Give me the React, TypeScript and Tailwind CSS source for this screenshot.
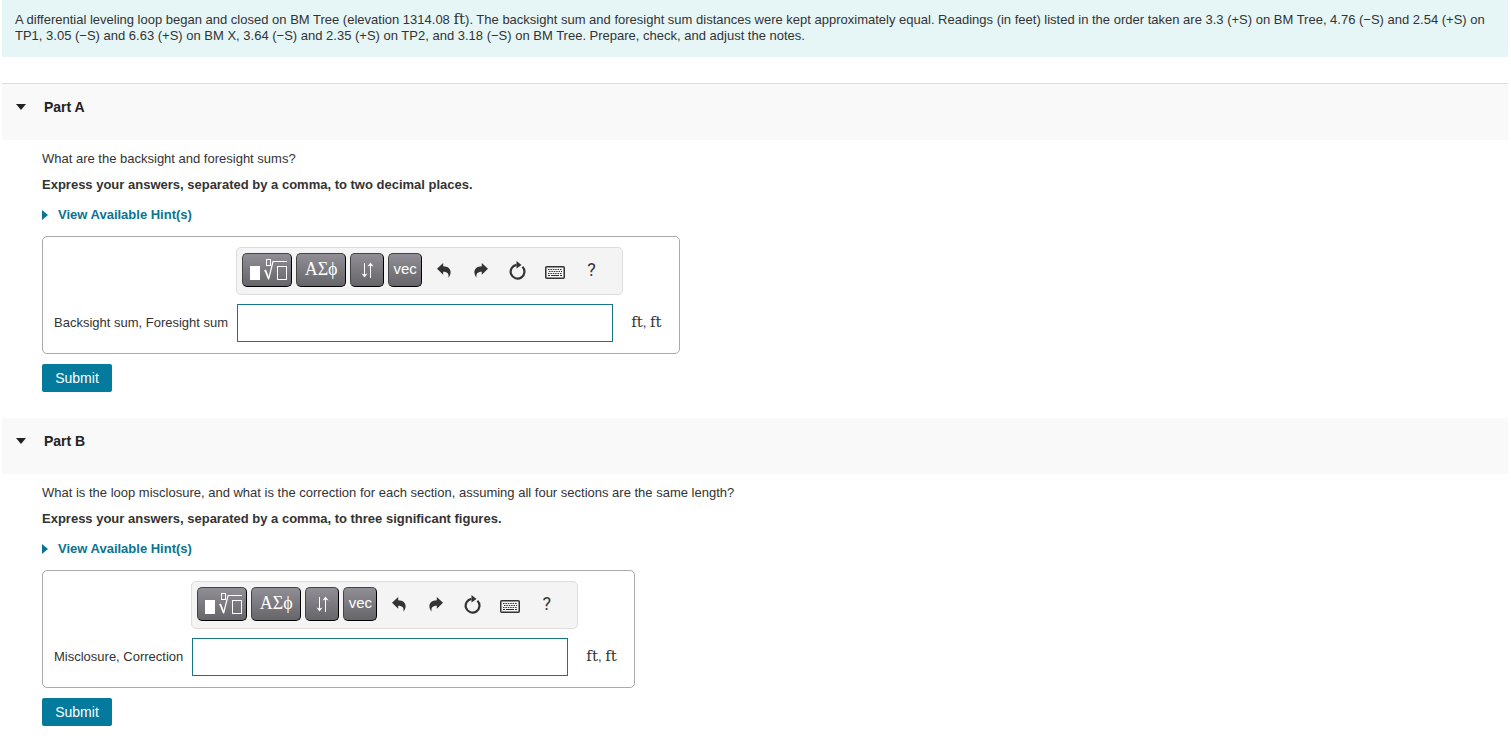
import React, { useId, useState } from "react";

interface PartProps {
  title: string;
  question: string;
  instruction: string;
  label: string;
  first?: boolean;
}

const Unit = ({ children }: { children: React.ReactNode }) => (
  <span className="font-['DejaVu_Serif',serif] text-[15px] leading-none">{children}</span>
);

const TemplatesIcon = () => (
  <svg width="40" height="24" viewBox="0 0 40 24" fill="none" stroke="white" aria-hidden="true">
    <rect x="3" y="8" width="10" height="14" fill="white" stroke="none" />
    <rect x="19.5" y="1.5" width="4" height="6" strokeWidth="1" />
    <path d="M17 13l2-1" strokeWidth="1" />
    <path d="M18.500 12.500l3 8" strokeWidth="1.800" />
    <path d="M21.500 21.500L26 3.500H40" strokeWidth="1.200" />
    <rect x="30.5" y="8.5" width="9" height="13" strokeWidth="1" />
  </svg>
);

const ArrowsIcon = () => (
  <svg width="14" height="18" viewBox="0 0 14 18" fill="none" stroke="white" aria-hidden="true">
    <path d="M4.500 2v13M10.500 17V4" strokeWidth="1" />
    <path d="M1.500 12.500l3 1 3-1-3 4zM7.500 5.500l3-1 3 1-3-4z" fill="white" stroke="none" />
  </svg>
);

const UndoIcon = () => (
  <svg width="14" height="15" viewBox="0 0 14 15" fill="#333333" aria-hidden="true">
    <path d="M6.200 0v3.200c4.800.1 7.600 2.600 7.400 6.400-.1 2-.9 3.600-2.200 5.100.7-3.700-.6-6-5.200-6v3.100L0 5.800z" />
  </svg>
);

const RedoIcon = () => (
  <svg width="14" height="15" viewBox="0 0 14 15" fill="#333333" aria-hidden="true">
    <path d="M7.800 0v3.200C3 3.300.2 5.800.4 9.600c.1 2 .9 3.600 2.200 5.100-.7-3.700.6-6 5.200-6v3.100L14 5.800z" />
  </svg>
);

const ResetIcon = () => (
  <svg width="18" height="19" viewBox="0 0 18 19" aria-hidden="true">
    <path d="M13.400 5.800a6.900 6.900 0 1 1-5.900-1.900" fill="none" stroke="#333333" strokeWidth="2.200" />
    <path d="M7.500 0l5 4-5 3.500z" fill="#333333" />
  </svg>
);

const KeyboardIcon = () => (
  <svg width="20" height="13" viewBox="0 0 20 13" fill="none" stroke="#333333" aria-hidden="true">
    <rect x="0.750" y="0.750" width="18.500" height="11.500" rx="1" strokeWidth="1.500" />
    <path d="M3 3.500h14M4 5.500h13M3 7.500h14" strokeWidth="1" strokeDasharray="1.500 0.900" />
    <path d="M3 9.500h2M6 9.500h8M15 9.500h2" strokeWidth="1.200" />
  </svg>
);

const paletteButton =
  "flex h-[34px] items-center justify-center rounded-[5px] border border-t-[#444444] border-r-black border-b-black border-l-[#444444] bg-linear-to-b from-[#918f96] to-[#666569] text-white";
const iconButton = "flex h-[34px] w-[33px] items-center justify-center text-[#333333]";

const Toolbar = () => (
  <div
    role="toolbar"
    aria-label="Equation editor"
    className="col-span-2 col-start-2 flex h-[48px] w-[387px] items-start rounded-[5px] border border-[#dddddd] bg-[#f4f4f4] p-[5px]"
  >
    <div className="flex gap-1">
      <button type="button" aria-label="Templates" className={`${paletteButton} w-[50px]`}>
        <TemplatesIcon />
      </button>
      <button type="button" aria-label="Symbols" className={`${paletteButton} w-[50px] pb-0.5 font-['Liberation_Serif',serif] text-lg`}>
        ΑΣϕ
      </button>
      <button type="button" aria-label="Arrows" className={`${paletteButton} w-[34px]`}>
        <ArrowsIcon />
      </button>
      <button type="button" className={`${paletteButton} w-[34px] pb-0.5 text-[15px]`}>
        vec
      </button>
    </div>
    <div className="ml-[5px] flex gap-1">
      <button type="button" aria-label="Undo" className={iconButton}>
        <UndoIcon />
      </button>
      <button type="button" aria-label="Redo" className={iconButton}>
        <RedoIcon />
      </button>
      <button type="button" aria-label="Reset" className={iconButton}>
        <ResetIcon />
      </button>
      <button type="button" aria-label="Keyboard shortcuts" className={`${iconButton} pt-1`}>
        <KeyboardIcon />
      </button>
      <button type="button" aria-label="Help" className={`${iconButton} font-[Roboto,sans-serif] text-lg`}>
        ?
      </button>
    </div>
  </div>
);

const Part = ({ title, question, instruction, label, first }: PartProps) => {
  const [open, setOpen] = useState(true);
  const inputId = useId();

  return (
    <section>
      <h2 className={`bg-[#f9f9f9] ${first ? "border-t border-[#dddddd]" : ""}`}>
        <button
          type="button"
          aria-expanded={open}
          onClick={() => setOpen(!open)}
          className="flex h-14 w-full items-start pt-[13px] pl-3.5 text-left text-sm font-bold text-[#222222]"
        >
          <svg width="10" height="6" viewBox="0 0 10 6" fill="#222222" className="mt-[7px] mr-[18px]" aria-hidden="true">
            <path d="M0 0h10L5 6z" />
          </svg>
          {title}
        </button>
      </h2>

      {open && (
        <div className="flex flex-col items-start pt-[11px] pb-[26px] pl-10">
          <p className="leading-4">{question}</p>
          <p className="mt-2.5 leading-4 font-bold">{instruction}</p>
          <a href="#hints" className="mt-3.5 flex items-center gap-2.5 leading-4 font-bold text-[#0a7490]">
            <svg width="6" height="10" viewBox="0 0 6 10" fill="#0a7490" aria-hidden="true">
              <path d="M0 0v10l6-5z" />
            </svg>
            View Available Hint(s)
          </a>

          <div className="mt-[13px] grid grid-cols-[auto_377px_auto] items-center gap-y-[9px] rounded-[5px] border border-[#aaaaaa] pt-2.5 pr-[17px] pb-[11px] pl-[11px]">
            <Toolbar />
            <label htmlFor={inputId} className="pr-2">
              {label}
            </label>
            <input
              id={inputId}
              type="text"
              className="h-[38px] w-[376px] justify-self-end border border-[#19738a] bg-white px-2 outline-none"
            />
            <span className="pl-[18px]">
              <Unit>ft</Unit>, <Unit>ft</Unit>
            </span>
          </div>

          <button type="submit" className="mt-2.5 h-7 w-[70px] rounded-[2px] bg-[#047a9c] text-sm text-white">
            Submit
          </button>
        </div>
      )}
    </section>
  );
};

const App = () => (
  <main className="bg-white pr-[3px] pl-[2px] font-['Liberation_Sans',Arial,sans-serif] text-[13px] text-[#333333]">
    <div className="mb-[26px] bg-[#e6f6f7] px-[13px] pt-3 pb-[13px] leading-4">
      A differential leveling loop began and closed on BM Tree (elevation 1314.08 <Unit>ft</Unit>). The backsight sum and
      foresight sum distances were kept approximately equal. Readings (in feet) listed in the order taken are 3.3 (+S)
      on BM Tree, 4.76 (−S) and 2.54 (+S) on TP1, 3.05 (−S) and 6.63 (+S) on BM X, 3.64 (−S) and 2.35 (+S) on TP2, and
      3.18 (−S) on BM Tree. Prepare, check, and adjust the notes.
    </div>
    <Part
      first
      title="Part A"
      question="What are the backsight and foresight sums?"
      instruction="Express your answers, separated by a comma, to two decimal places."
      label="Backsight sum, Foresight sum"
    />
    <Part
      title="Part B"
      question="What is the loop misclosure, and what is the correction for each section, assuming all four sections are the same length?"
      instruction="Express your answers, separated by a comma, to three significant figures."
      label="Misclosure, Correction"
    />
  </main>
);

export default App;
